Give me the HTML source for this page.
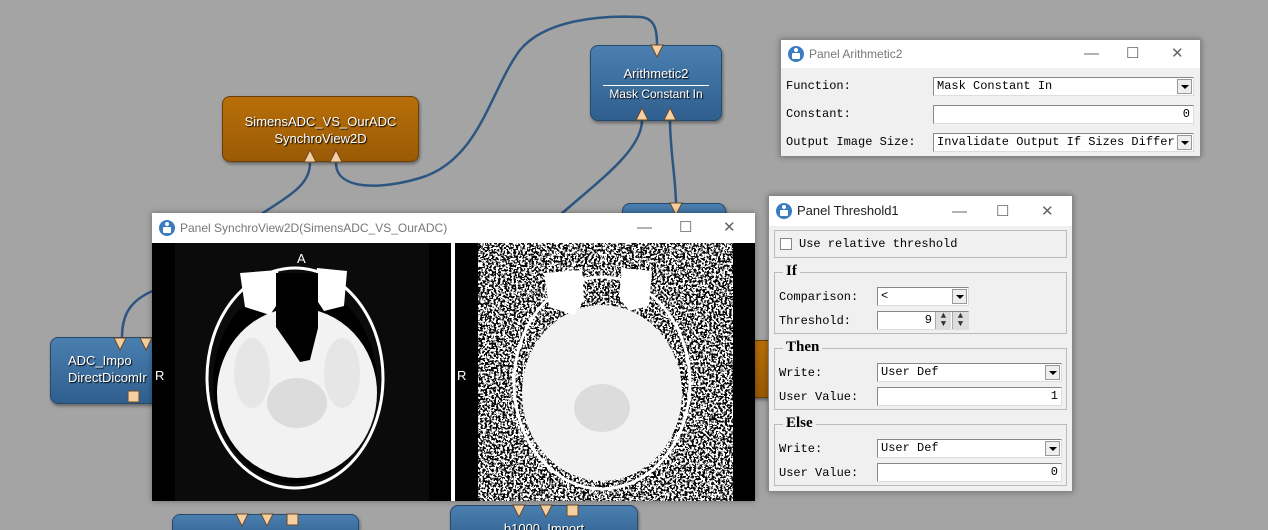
<!DOCTYPE html>
<html><head><meta charset="utf-8"><style>
*{margin:0;padding:0;box-sizing:border-box}
html,body{width:1268px;height:530px;overflow:hidden}
body{background:#a4a4a4;position:relative;font-family:"Liberation Sans",sans-serif}
.node{position:absolute;border-radius:8px;color:#fff;text-align:center;font-size:13px;line-height:17px;text-shadow:1px 1px 1px #000}
.blue{background:linear-gradient(#4a7fb0,#2f5f8e);border:1px solid #254a70;box-shadow:1px 2px 3px rgba(0,0,0,.4)}
.orange{background:linear-gradient(#b86f0a,#9a5a05);border:1px solid #6b3f05;box-shadow:1px 2px 3px rgba(0,0,0,.4)}
.win{position:absolute;background:#f0f0f0;border:1px solid #888;box-shadow:0 0 6px rgba(0,0,0,.35)}
.tb{height:28px;background:#fff;position:relative;font-size:12px;color:#777;line-height:28px;padding-left:28px}
.tb .ic{position:absolute;left:7px;top:6px;width:16px;height:16px;border-radius:50%;background:#3b7bbf}
.tb .ic:before{content:"";position:absolute;left:6px;top:2px;width:4px;height:4px;background:#fff;border-radius:50%}
.tb .ic:after{content:"";position:absolute;left:4px;top:7px;width:8px;height:6px;background:#fff;border-radius:1px}
.ctl{position:absolute;top:0;font-size:15px;color:#666}
.m{font-family:"Liberation Mono",monospace;font-size:12px;color:#000}
.lab{position:absolute}
.box{position:absolute;background:#fff;border:1px solid #888;border-right-color:#ddd;border-bottom-color:#ddd;height:19px;font-family:"Liberation Mono",monospace;font-size:12px;line-height:17px;padding:0 3px}
.dd{position:absolute;right:1px;top:1px;width:15px;height:15px;background:#eee;border:1px solid #999}
.dd:after{content:"";position:absolute;left:3px;top:5px;border:4px solid transparent;border-top:4px solid #000}
.grp{position:absolute;border:1px solid #bbb;left:5px;right:5px}
.gt{position:absolute;top:-10px;left:8px;background:#f0f0f0;padding:0 3px;font-family:"Liberation Serif",serif;font-weight:bold;font-size:15px}
.sp{position:absolute;top:0;width:16px;height:17px;background:#ddd;border-left:1px solid #aaa;font-size:9px;line-height:8px;text-align:center;color:#333}
</style></head><body>
<svg width="1268" height="530" style="position:absolute;left:0;top:0">
<g fill="none" stroke="#2d5680" stroke-width="2.5">
<path d="M336,163 C336,190 380,190 420,178 C480,160 490,90 520,50 C545,20 600,15 640,17 C655,18 657,30 657,45"/>
<path d="M310,163 C310,185 290,195 260,215"/>
<path d="M642,120 C642,150 600,180 560,215"/>
<path d="M670,120 C670,150 676,180 676,205"/>
<path d="M122,337 C122,315 130,300 155,290"/>
</g></svg>
<div class="node orange" style="left:222px;top:96px;width:197px;height:66px;padding-top:16px">SimensADC_VS_OurADC<br>SynchroView2D</div>
<div class="node blue" style="left:590px;top:45px;width:132px;height:76px;padding-top:19px">Arithmetic2<div style="border-top:1px solid #fff;margin:3px 12px 0;font-size:12px">Mask Constant In</div></div>
<div class="node blue" style="left:622px;top:203px;width:104px;height:30px"></div>
<div class="node blue" style="left:50px;top:337px;width:120px;height:67px;padding-top:14px;text-align:left;padding-left:17px">ADC_Impo<br>DirectDicomIr</div>
<div class="node orange" style="left:726px;top:340px;width:50px;height:58px;padding-top:20px;text-align:left;padding-left:6px">oV</div>
<div class="node blue" style="left:172px;top:514px;width:187px;height:30px"></div>
<div class="node blue" style="left:450px;top:505px;width:188px;height:40px;padding-top:14px">b1000_Import</div>
<svg width="1268" height="530" style="position:absolute;left:0;top:0"><g fill="#f5cfa0" stroke="#6a4a2a" stroke-width="1">
<path d="M651,45 h12 l-6,12z"/><path d="M636,120 l6,-12 l6,12z"/><path d="M664,120 l6,-12 l6,12z"/>
<path d="M304,162 l6,-12 l6,12z"/><path d="M330,162 l6,-12 l6,12z"/>
<path d="M114,338 h12 l-6,12z"/><path d="M140,338 h12 l-6,12z"/><rect x="128" y="391" width="11" height="11"/>
<path d="M670,203 h12 l-6,12z"/>
<path d="M236,514 h12 l-6,12z"/><path d="M261,514 h12 l-6,12z"/><rect x="287" y="514" width="11" height="11"/>
<path d="M513,505 h12 l-6,12z"/><path d="M540,505 h12 l-6,12z"/><rect x="567" y="505" width="11" height="11"/>
</g></svg>

<div class="win" style="left:152px;top:213px;width:603px;height:288px;border:none">
<div class="tb" style="height:30px;line-height:30px">Panel SynchroView2D(SimensADC_VS_OurADC)<span class="ic" style="top:7px"></span>
<span class="ctl" style="left:485px">—</span><span class="ctl" style="left:527px">☐</span><span class="ctl" style="left:571px">✕</span></div>
<svg width="603" height="258" style="display:block">
<defs>
<filter id="n" x="0" y="0" width="100%" height="100%"><feTurbulence type="fractalNoise" baseFrequency="0.45" numOctaves="2" seed="3"/><feColorMatrix type="matrix" values="0 0 0 0 1 0 0 0 0 1 0 0 0 0 1 2.2 0 0 0 -0.6"/><feComponentTransfer><feFuncA type="discrete" tableValues="0 1"/></feComponentTransfer></filter>
<clipPath id="rc"><rect x="326" y="0" width="255" height="258"/></clipPath>
</defs>
<rect width="603" height="258" fill="#000"/>
<rect x="23" y="0" width="254" height="258" fill="#0b0b0b"/>
<ellipse cx="143" cy="135" rx="88" ry="110" fill="none" stroke="#fff" stroke-width="3"/>
<ellipse cx="143" cy="140" rx="82" ry="100" fill="#000"/>
<ellipse cx="145" cy="150" rx="80" ry="85" fill="#f2f2f2"/>
<ellipse cx="145" cy="160" rx="30" ry="25" fill="#dcdcdc"/>
<ellipse cx="100" cy="130" rx="18" ry="35" fill="#e6e6e6"/>
<ellipse cx="190" cy="130" rx="18" ry="35" fill="#e6e6e6"/>
<path d="M88,30 l38,-3 l2,30 l-10,15 l-25,-8z M165,25 l30,3 l-3,35 l-20,5 l-10,-15z" fill="#fff"/>
<path d="M124,30 l42,0 l0,55 l-8,32 l-10,2 l-10,-15 l-14,-20z" fill="#000"/>
<text x="145" y="20" fill="#fff" font-size="13">A</text>
<text x="3" y="137" fill="#fff" font-size="13">R</text>
<rect x="299" y="0" width="4" height="258" fill="#fff"/>
<rect x="326" y="0" width="255" height="258" fill="#0a0a0a"/>
<rect x="326" y="0" width="255" height="258" filter="url(#n)" clip-path="url(#rc)"/>
<ellipse cx="450" cy="140" rx="88" ry="106" fill="none" stroke="#fff" stroke-width="3"/>
<ellipse cx="450" cy="150" rx="80" ry="88" fill="#f2f2f2"/>
<ellipse cx="450" cy="165" rx="28" ry="24" fill="#dcdcdc"/>
<path d="M392,30 l38,-3 l2,30 l-10,15 l-25,-8z M470,25 l30,3 l-3,35 l-20,5 l-10,-15z" fill="#fff"/>
<text x="447" y="20" fill="#fff" font-size="13">A</text>
<text x="305" y="137" fill="#fff" font-size="13">R</text>
</svg></div>

<div class="win" style="left:780px;top:39px;width:421px;height:118px">
<div class="tb">Panel Arithmetic2<span class="ic"></span>
<span class="ctl" style="left:303px">—</span><span class="ctl" style="left:345px">☐</span><span class="ctl" style="left:390px">✕</span></div>
<span class="lab m" style="left:5px;top:39px">Function:</span>
<span class="lab m" style="left:5px;top:67px">Constant:</span>
<span class="lab m" style="left:5px;top:95px">Output Image Size:</span>
<div class="box" style="left:152px;top:37px;width:261px">Mask Constant In<span class="dd"></span></div>
<div class="box" style="left:152px;top:65px;width:261px;text-align:right">0</div>
<div class="box" style="left:152px;top:93px;width:261px">Invalidate Output If Sizes Differ<span class="dd"></span></div>
</div>

<div class="win" style="left:768px;top:195px;width:305px;height:297px">
<div class="tb" style="height:30px;line-height:30px;color:#222;font-size:13px">Panel Threshold1<span class="ic" style="top:7px"></span>
<span class="ctl" style="left:183px;top:1px">—</span><span class="ctl" style="left:227px;top:1px">☐</span><span class="ctl" style="left:272px;top:1px">✕</span></div>
<div class="grp" style="top:34px;height:28px"><span style="position:absolute;left:5px;top:7px;width:12px;height:12px;background:#fff;border:1px solid #888"></span><span class="lab m" style="left:24px;top:6px">Use relative threshold</span></div>
<div class="grp" style="top:76px;height:62px"><span class="gt">If</span>
<span class="lab m" style="left:4px;top:17px">Comparison:</span><span class="lab m" style="left:4px;top:41px">Threshold:</span>
<div class="box" style="left:102px;top:14px;width:92px">&lt;<span class="dd"></span></div>
<div class="box" style="left:102px;top:38px;width:92px;padding-right:36px;text-align:right">9<span class="sp" style="right:17px">▲<br>▼</span><span class="sp" style="right:0">▲<br>▼</span></div></div>
<div class="grp" style="top:152px;height:62px"><span class="gt">Then</span>
<span class="lab m" style="left:4px;top:17px">Write:</span><span class="lab m" style="left:4px;top:41px">User Value:</span>
<div class="box" style="left:102px;top:14px;width:185px">User Def<span class="dd"></span></div>
<div class="box" style="left:102px;top:38px;width:185px;text-align:right">1</div></div>
<div class="grp" style="top:228px;height:62px"><span class="gt">Else</span>
<span class="lab m" style="left:4px;top:17px">Write:</span><span class="lab m" style="left:4px;top:41px">User Value:</span>
<div class="box" style="left:102px;top:14px;width:185px">User Def<span class="dd"></span></div>
<div class="box" style="left:102px;top:38px;width:185px;text-align:right">0</div></div>
</div>
</body></html>
